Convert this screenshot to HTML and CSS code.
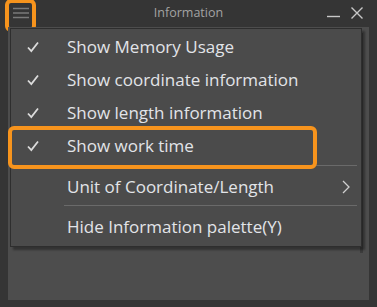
FILE: index.html
```html
<!DOCTYPE html>
<html lang="en">
<head>
  <meta charset="UTF-8" />
  <title>Information</title>
  <link rel="stylesheet" href="styles.css">
</head>
<body>

  <!-- Title bar -->
  <div class="titlebar">
    <div class="menu-btn">
      <svg width="16" height="12" viewBox="0 0 16 12">
        <path d="M0 1.5H16M0 6H16M0 10.5H16" stroke="#7a7a7a" stroke-width="1.3"/>
      </svg>
    </div>
    <div class="title">Information</div>
    <div class="win-btns">
      <svg width="15" height="14" viewBox="0 0 15 14">
        <path d="M1 10.5H14" stroke="#c8c8c8" stroke-width="1.4"/>
      </svg>
      <svg width="14" height="14" viewBox="0 0 14 14">
        <path d="M1.5 1.5L12.5 12.5M12.5 1.5L1.5 12.5" stroke="#c8c8c8" stroke-width="1.4"/>
      </svg>
    </div>
    <div class="ring ring-btn"></div>
  </div>

  <!-- Palette body -->
  <div class="panel">
    <div class="scroll-strip"></div>

    <!-- Popup menu -->
    <div class="popup">
      <div class="item">
        <span class="check"><svg width="12" height="12" viewBox="0 0 12 12"><path d="M1 6.5L4.3 10L11 1.5" fill="none" stroke="#dcdcdc" stroke-width="1.8"/></svg></span>
        <span class="label">Show Memory Usage</span>
      </div>
      <div class="item">
        <span class="check"><svg width="12" height="12" viewBox="0 0 12 12"><path d="M1 6.5L4.3 10L11 1.5" fill="none" stroke="#dcdcdc" stroke-width="1.8"/></svg></span>
        <span class="label">Show coordinate information</span>
      </div>
      <div class="item">
        <span class="check"><svg width="12" height="12" viewBox="0 0 12 12"><path d="M1 6.5L4.3 10L11 1.5" fill="none" stroke="#dcdcdc" stroke-width="1.8"/></svg></span>
        <span class="label">Show length information</span>
      </div>
      <div class="item">
        <span class="check"><svg width="12" height="12" viewBox="0 0 12 12"><path d="M1 6.5L4.3 10L11 1.5" fill="none" stroke="#dcdcdc" stroke-width="1.8"/></svg></span>
        <span class="label">Show work time</span>
      </div>
      <div class="sep"></div>
      <div class="item">
        <span class="check"></span>
        <span class="label">Unit of Coordinate/Length</span>
        <svg class="arrow" width="8" height="14" viewBox="0 0 8 14"><path d="M1 1L7 7L1 13" fill="none" stroke="#cfcfcf" stroke-width="1.3"/></svg>
      </div>
      <div class="sep sep2"></div>
      <div class="item">
        <span class="check"></span>
        <span class="label">Hide Information palette(Y)</span>
      </div>

      <div class="ring ring-item"></div>
    </div>
  </div>

</body>
</html>
```

FILE: styles.css
```css
body {
  margin: 0;
  width: 377px;
  height: 307px;
  background-color: #353535;
  font-family: "Open Sans", "Noto Sans", sans-serif;
  overflow: hidden;
  position: relative;
}

.titlebar {
  height: 27px;
  display: flex;
  align-items: center;
  position: relative;
}

.menu-btn {
  width: 16px;
  margin-left: 13px;
  margin-top: -2px;
  display: flex;
}

.title {
  flex: 1;
  text-align: center;
  color: #a3a3a3;
  font-size: 12.5px;
  margin-left: 22px;
  margin-top: -2px;
}

.win-btns {
  display: flex;
  gap: 9px;
  margin-right: 13px;
  margin-top: -2px;
}

.win-btns svg {
  display: block;
}

/* orange call-out rings */
.ring {
  position: absolute;
  border: 4px solid #f7941d;
  border-radius: 6px;
  box-sizing: border-box;
}

.ring-btn {
  left: 5px;
  top: -1px;
  width: 31px;
  height: 33px;
}

.panel {
  margin: 0 8px;
  height: 273px;
  background-color: #4d4d4d;
  position: relative;
}

.scroll-strip {
  position: absolute;
  right: 6px;
  top: 6px;
  width: 3px;
  height: 220px;
  background-color: #3c3c3c;
}

.popup {
  position: absolute;
  left: 2px;
  top: 1px;
  width: 352px;
  height: 219px;
  box-sizing: border-box;
  background-color: #4b4b4b;
  border: 1px solid #2e2e2e;
  box-shadow: 3px 3px 2px rgba(0, 0, 0, 0.35);
  padding-top: 1px;
}

.item {
  height: 33px;
  display: flex;
  align-items: center;
  color: #e2e4e8;
  font-size: 17px;
}

.check {
  width: 56px;
  padding-left: 16px;
  box-sizing: border-box;
  display: flex;
}

.label {
  flex: 1;
}

.arrow {
  margin-right: 11px;
}

.sep {
  height: 1px;
  background-color: #6a6a6a;
  margin: 3px 4px 4px 53px;
}

.sep2 {
  margin-top: 2px;
}

.ring-item {
  left: -3px;
  top: 97px;
  width: 309px;
  height: 43px;
}
```
